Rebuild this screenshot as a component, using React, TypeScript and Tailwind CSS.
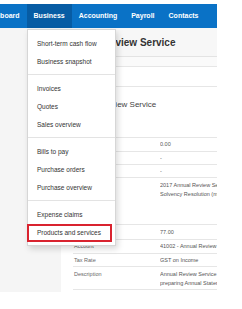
const tabs = ['Dashboard', 'Business', 'Accounting', 'Payroll', 'Contacts'];

const groups = [
  ['Short-term cash flow', 'Business snapshot'],
  ['Invoices', 'Quotes', 'Sales overview'],
  ['Bills to pay', 'Purchase orders', 'Purchase overview'],
  ['Expense claims', 'Products and services'],
];

function Row({ label, lines, h }: { label: string; lines: string[]; h: string }) {
  return (
    <div className={`flex border-b border-[#e6e6e6] ${h} ${lines.length > 1 ? 'items-start pt-[3px]' : 'items-center'}`}>
      <div className="w-[87px] shrink-0 pl-[1px] text-[5.5px] text-[#666]">{label}</div>
      <div className="flex-1 min-w-0 text-[5.5px] leading-[9px] text-[#555]">
        {lines.map((l) => (
          <div key={l} className="whitespace-nowrap overflow-hidden">
            {l}
          </div>
        ))}
      </div>
    </div>
  );
}

export default function App() {
  return (
    <div className="w-[242px] h-[309px] bg-white overflow-hidden font-['Liberation_Sans',Arial,sans-serif]">
      <div className="h-[4px]" />
      <div className="w-[217px] relative">
        {/* Top nav */}
        <nav className="h-[24px] bg-[#0a72c6] flex overflow-hidden">
          <div className="flex ml-[-24px]">
            {tabs.map((t) => (
              <div
                key={t}
                className={`px-[7px] flex items-center text-[7px] font-bold text-white whitespace-nowrap ${
                  t === 'Business' ? 'bg-[#075ca4]' : ''
                }`}
              >
                {t}
              </div>
            ))}
          </div>
        </nav>

        {/* Page */}
        <div className="bg-[#f5f5f5] flex h-[264px]">
          <div className="w-[61px] shrink-0" />
          <div className="flex-1 min-w-0 flex flex-col overflow-hidden">
            <div className="h-[28px] shrink-0 flex items-center pl-[5px] bg-[#f7f7f7]">
              <h1 className="text-[10px] font-bold text-[#333] whitespace-nowrap">Annual Review Service</h1>
            </div>
            <div className="flex-1 bg-white border-t border-[#e3e3e3]">
              <div className="h-[10px] bg-[#fafafa] border-b border-[#e6e6e6]" />
              <div className="h-[20px] border-b border-[#e6e6e6] flex items-center pl-[13px] text-[5.5px] text-[#666]">
                Item code
              </div>
              <div className="h-[35px] flex items-center pl-[13px] text-[8px] text-[#444] whitespace-nowrap">
                Annual Review Service
              </div>
              <div className="h-[15px] flex items-center pl-[13px] text-[6px] font-bold text-[#444]">Purchase</div>
              <div className="ml-[12px] border-t border-[#e6e6e6]">
                <Row label="Unit Price" lines={['0.00']} h="h-[14px]" />
                <Row label="Account" lines={['-']} h="h-[13px]" />
                <Row label="Tax Rate" lines={['-']} h="h-[13px]" />
                <Row
                  label="Description"
                  lines={['2017 Annual Review Service and', 'Solvency Resolution (max 2 directors)']}
                  h="h-[26px] border-b-0"
                />
              </div>
              <div className="h-[20px] flex items-center pl-[13px] text-[6px] font-bold text-[#444]">Sell</div>
              <div className="ml-[12px] border-t border-[#e6e6e6]">
                <Row label="Unit Price" lines={['77.00']} h="h-[15px]" />
                <Row label="Account" lines={['41002 - Annual Review Fees']} h="h-[14px]" />
                <Row label="Tax Rate" lines={['GST on Income']} h="h-[13px]" />
                <Row
                  label="Description"
                  lines={['Annual Review Service including', 'preparing Annual Statement']}
                  h="h-[23px]"
                />
              </div>
            </div>
          </div>
        </div>

        {/* Business dropdown */}
        <div className="absolute left-[27px] top-[25px] w-[89px] bg-white border border-[#d6d6d6] shadow-[2px_3px_6px_rgba(0,0,0,0.15)]">
          {groups.map((g, i) => (
            <div key={i} className={`pt-[5px] pb-[3px] ${i > 0 ? 'border-t border-[#e3e3e3]' : ''}`}>
              {g.map((item) =>
                item === 'Products and services' ? (
                  <div
                    key={item}
                    className="h-[18px] ml-[-1px] mr-[3px] pl-[8px] flex items-center border-2 border-[#d9232f] text-[6.5px] text-[#333] whitespace-nowrap"
                  >
                    {item}
                  </div>
                ) : (
                  <div key={item} className="h-[18px] pl-[9px] flex items-center text-[6.5px] text-[#333] whitespace-nowrap">
                    {item}
                  </div>
                )
              )}
            </div>
          ))}
        </div>
      </div>
    </div>
  );
}
